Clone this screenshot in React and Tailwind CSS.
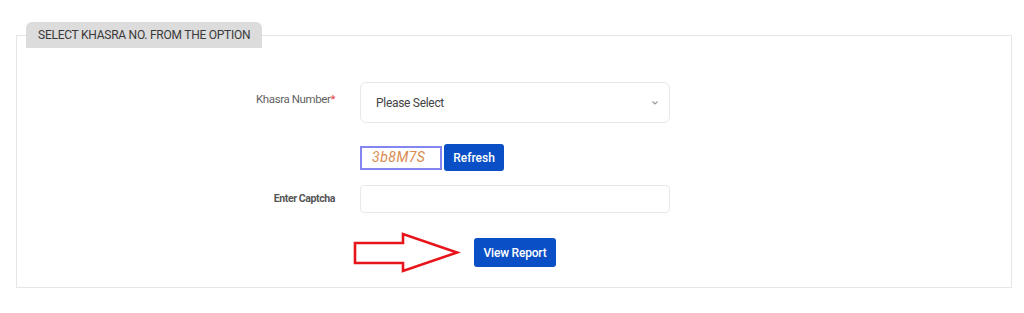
import React from "react";

const FONT = { fontFamily: "Roboto, 'Noto Sans', Arial, sans-serif" };

const Arrow = () => (
  <svg width="112" height="41" viewBox="0 0 112 41" className="shrink-0">
    <polygon
      points="5,11 53,11 53,2 107,20.5 53,39 53,31 5,31"
      fill="#fff"
      stroke="#e8141c"
      strokeWidth="2.6"
      strokeLinejoin="miter"
    />
  </svg>
);

export default function App() {
  return (
    <div className="bg-white w-[1024px] h-[313px] px-4 pt-[22px]" style={FONT}>
      <fieldset className="border border-[#e6e6e6] w-[996px] pb-[14px]">
        <legend className="ml-[9px] h-[26px] px-3 flex items-center bg-[#dcdcdc] rounded-t-md text-[12px] text-[#3a3a3a] tracking-[-0.25px]">
          SELECT KHASRA NO. FROM THE OPTION
        </legend>

        <div className="flex flex-col">
          {/* khasra select */}
          <div className="flex mt-[34px]">
            <div className="w-[318px] text-right pt-[9px] text-[11.5px] text-[#5f5f5f] tracking-[-0.4px]">
              Khasra Number<span className="text-[#e53935]">*</span>
            </div>
            <div className="ml-[25px] w-[310px] h-[41px] border border-[#e8e8e8] rounded-md flex items-center justify-between pl-[15px] pr-[10px]">
              <span className="text-[12px] text-[#444] tracking-[-0.3px]">Please Select</span>
              <svg width="8" height="6" viewBox="0 0 8 6">
                <path d="M1.5 1.5 L4 4 L6.5 1.5" fill="none" stroke="#9a9a9a" strokeWidth="1.2" />
              </svg>
            </div>
          </div>

          {/* captcha image + refresh */}
          <div className="flex items-center mt-[21px] pl-[343px]">
            <div className="w-[82px] h-[24px] border-2 border-[#8585f2] flex items-center pl-[10px]">
              <span className="italic text-[14px] text-[#d98a4e] tracking-[0.5px]">3b8M7S</span>
            </div>
            <button className="ml-[2px] w-[60px] h-[27px] bg-[#0a4fc5] rounded-[3px] text-white text-[12px] font-medium">
              Refresh
            </button>
          </div>

          {/* captcha input */}
          <div className="flex items-center mt-[14px]">
            <div className="w-[318px] text-right text-[10.5px] font-bold text-[#555] tracking-[-0.4px]">
              Enter Captcha
            </div>
            <div className="ml-[25px] w-[310px] h-[28px] border border-[#e8e8e8] rounded-[4px]" />
          </div>

          {/* submit */}
          <div className="flex items-center mt-[19px] pl-[333px]">
            <Arrow />
            <button className="ml-[12px] w-[82px] h-[29px] bg-[#0a4fc5] rounded-[3px] text-white text-[12px] font-medium tracking-[-0.2px]">
              View Report
            </button>
          </div>
        </div>
      </fieldset>
    </div>
  );
}
